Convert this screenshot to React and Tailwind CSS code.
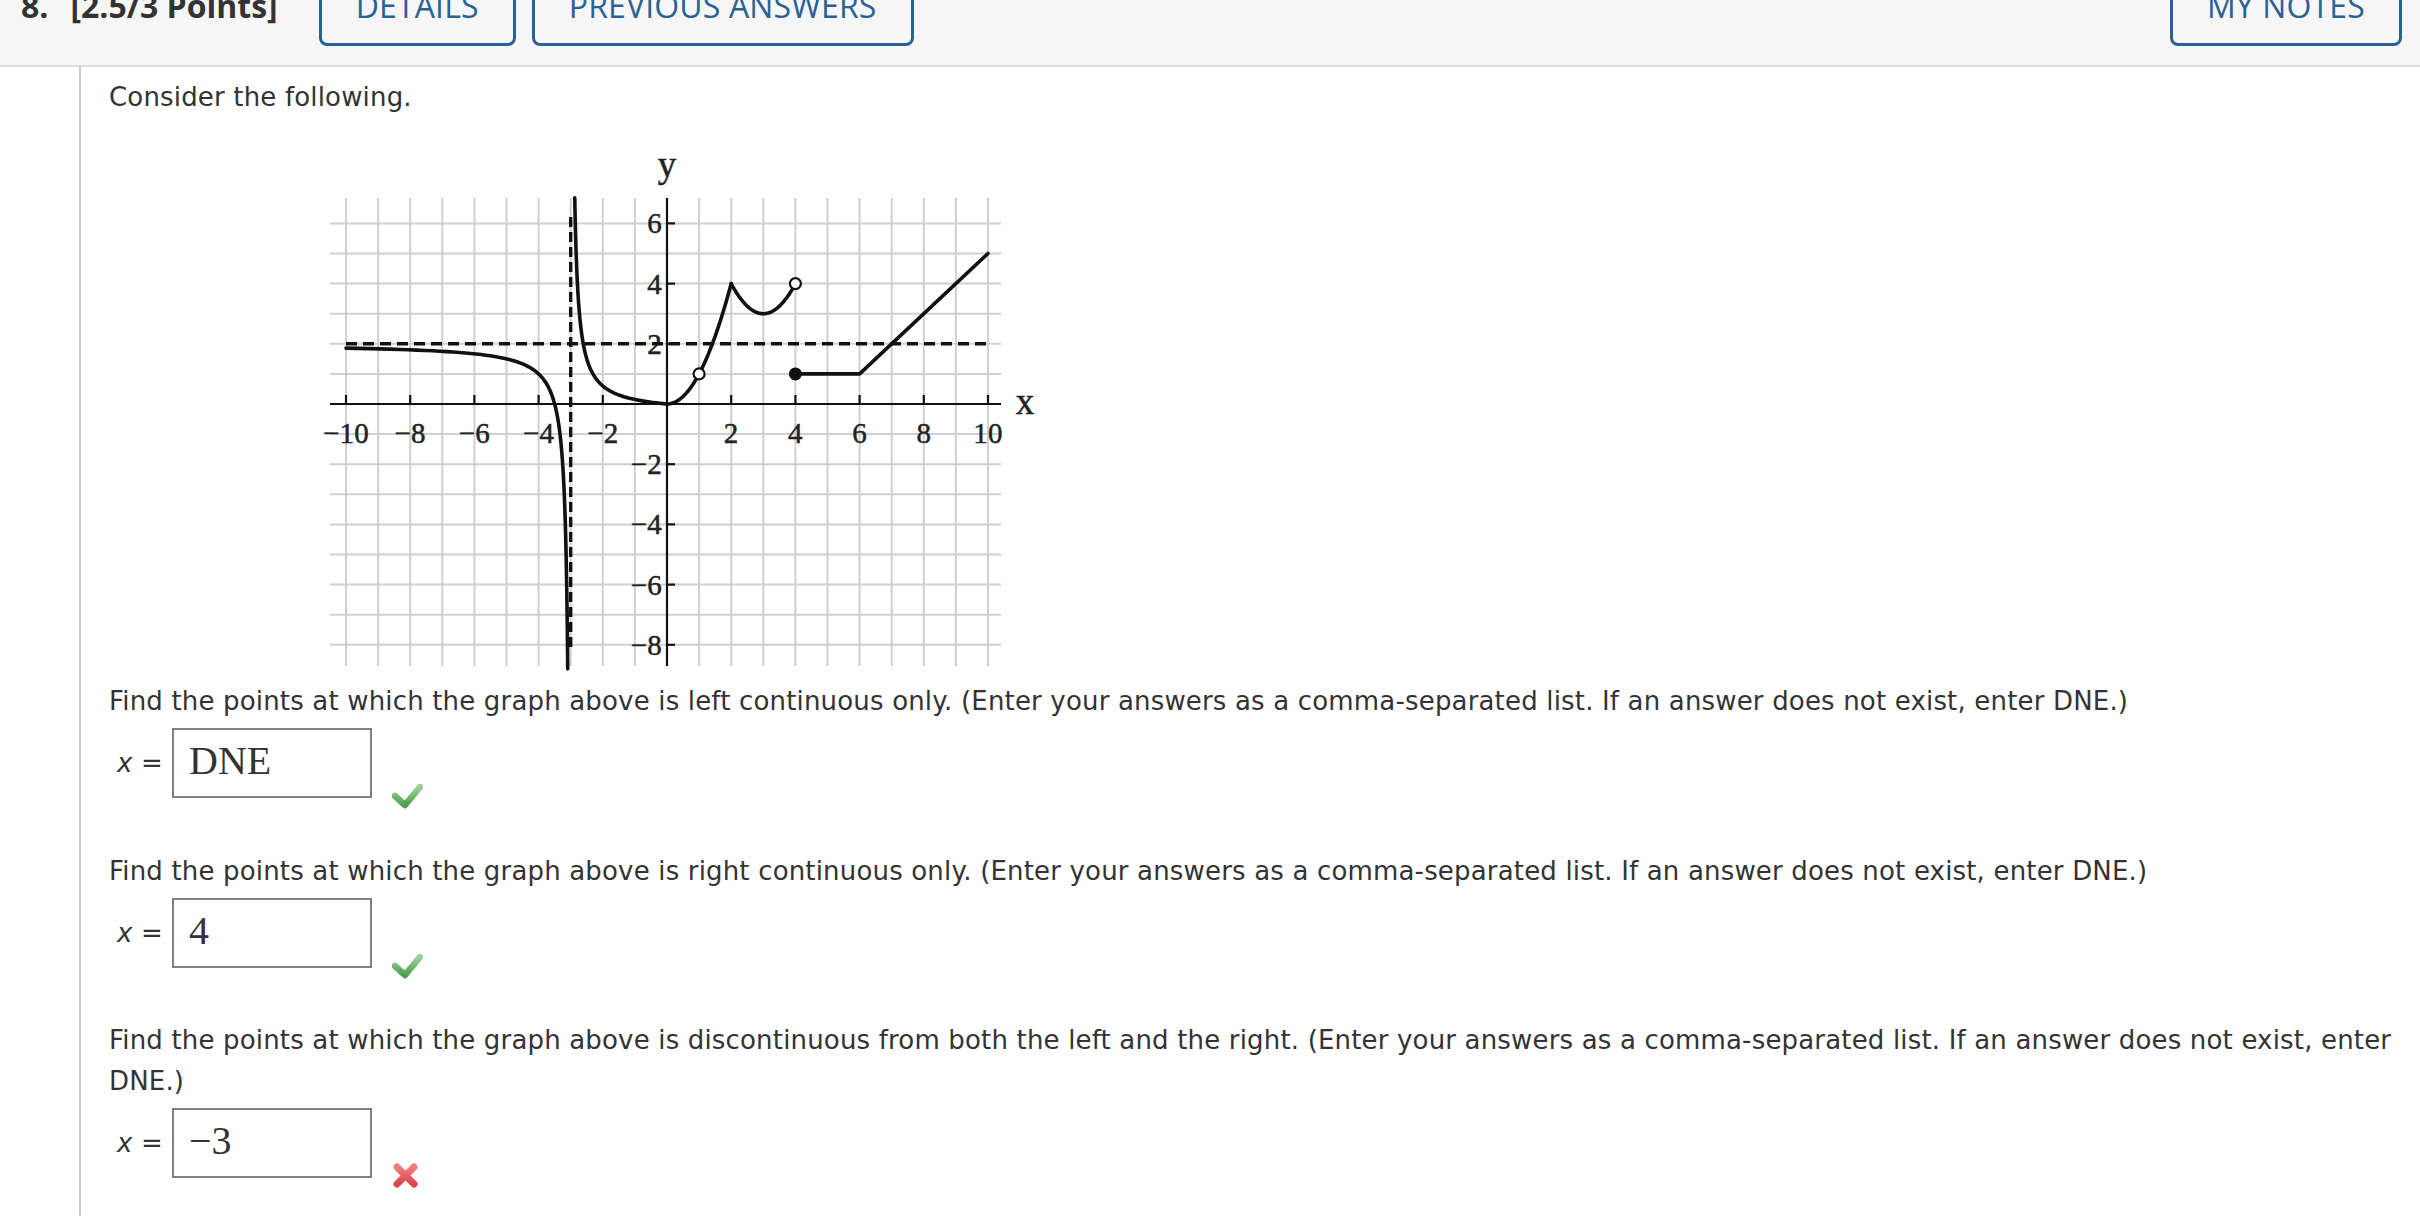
import React from 'react';

const X0 = 667;
const Y0 = 404;
const UX = 32.1;
const UY = 30.1;
const px = (u) => X0 + u * UX;
const py = (v) => Y0 - v * UY;

function linePath(fn, us) {
  return us
    .map((u, i) => `${i ? 'L' : 'M'}${px(u).toFixed(2)} ${py(fn(u)).toFixed(2)}`)
    .join(' ');
}

function geo(a, b, n) {
  const out = [];
  for (let k = 0; k <= n; k++) out.push(a * Math.pow(b / a, k / n));
  return out;
}

function lin(a, b, n) {
  const out = [];
  for (let k = 0; k <= n; k++) out.push(a + ((b - a) * k) / n);
  return out;
}

const leftBranch = linePath(
  (u) => 2 + 1 / (u + 3),
  geo(7, 0.0926, 80).map((t) => -3 - t)
);
const rightBranch = linePath(
  (u) => 0.9 / (u + 3) - 0.3,
  geo(0.1259, 3, 80).map((s) => -3 + s)
);
const parab = linePath((u) => u * u, lin(0, 2, 40));
const bowl = linePath((u) => (u - 3) * (u - 3) + 3, lin(2, 4, 40));
const ramp = `M${px(4)} ${py(1)} L${px(6)} ${py(1)} L${px(10)} ${py(5)}`;

function Graph() {
  const xs = [];
  for (let u = -10; u <= 10; u++) xs.push(u);
  const ys = [];
  for (let v = -8; v <= 6; v++) ys.push(v);
  const xl = [-10, -8, -6, -4, -2, 2, 4, 6, 8, 10];
  const yl = [6, 4, 2, -2, -4, -6, -8];
  const fmt = (n) => (n < 0 ? `\u2212${-n}` : `${n}`);
  return (
    <svg width="760" height="530" viewBox="300 145 760 530" className="block ml-[191px] mt-[27px]">
      <g stroke="#d0d0d0" strokeWidth="2">
        {xs.map((u) => (
          <line key={'gx' + u} x1={px(u)} x2={px(u)} y1={198} y2={666} />
        ))}
        {ys.map((v) => (
          <line key={'gy' + v} x1={330} x2={1001} y1={py(v)} y2={py(v)} />
        ))}
      </g>
      <g stroke="#111" strokeWidth="2.2">
        <line x1={X0} x2={X0} y1={198} y2={666} />
        <line x1={330} x2={1001} y1={Y0} y2={Y0} />
        {xl.map((u) => (
          <line key={'tx' + u} x1={px(u)} x2={px(u)} y1={Y0 - 9} y2={Y0} />
        ))}
        {yl.map((v) => (
          <line key={'ty' + v} x1={X0} x2={X0 + 8} y1={py(v)} y2={py(v)} />
        ))}
      </g>
      <g fill="#222" stroke="#222" strokeWidth="0.5" style={{ fontFamily: '"Liberation Serif", serif' }} fontSize="29">
        {xl.map((u) => (
          <text key={'lx' + u} x={px(u)} y={443} textAnchor="middle">
            {fmt(u)}
          </text>
        ))}
        {yl.map((v) => (
          <text key={'ly' + v} x={662} y={py(v) + 10} textAnchor="end">
            {fmt(v)}
          </text>
        ))}
        <text x={1025} y={414} textAnchor="middle" fontSize="37">x</text>
        <text x={667} y={177} textAnchor="middle" fontSize="37">y</text>
      </g>
      <g stroke="#111" strokeWidth="3.4" fill="none">
        <line x1={px(-10)} x2={px(10)} y1={py(2)} y2={py(2)} strokeDasharray="11 6" />
        <line x1={px(-3)} x2={px(-3)} y1={217} y2={648} strokeDasharray="10 5" />
      </g>
      <g stroke="#111" strokeWidth="3.6" fill="none" strokeLinejoin="round" strokeLinecap="round">
        <path d={leftBranch} />
        <path d={rightBranch} />
        <path d={parab} />
        <path d={bowl} />
        <path d={ramp} />
      </g>
      <circle cx={px(1)} cy={py(1)} r="5.5" fill="#fff" stroke="#111" strokeWidth="2.2" />
      <circle cx={px(4)} cy={py(4)} r="5.5" fill="#fff" stroke="#111" strokeWidth="2.2" />
      <circle cx={px(4)} cy={py(1)} r="6.5" fill="#111" />
    </svg>
  );
}

function Check() {
  return (
    <svg width="31" height="25" viewBox="0 0 31 25" className="ml-[20px] mt-[56px] shrink-0">
      <defs>
        <linearGradient id="ck" x1="0" y1="0" x2="0" y2="1">
          <stop offset="0" stopColor="#9ad49a" />
          <stop offset="1" stopColor="#4e9e4e" />
        </linearGradient>
      </defs>
      <path d="M3 12 L13 21 L28 3" fill="none" stroke="url(#ck)" strokeWidth="6.5" strokeLinecap="round" strokeLinejoin="round" />
    </svg>
  );
}

function Cross() {
  return (
    <svg width="27" height="27" viewBox="0 0 27 27" className="ml-[20px] mt-[54px] shrink-0">
      <defs>
        <linearGradient id="cx" x1="0" y1="0" x2="0" y2="1">
          <stop offset="0" stopColor="#ef7d7d" />
          <stop offset="1" stopColor="#d9474a" />
        </linearGradient>
      </defs>
      <g stroke="url(#cx)" strokeWidth="7" strokeLinecap="round">
        <line x1="5" y1="5" x2="22" y2="22" />
        <line x1="22" y1="5" x2="5" y2="22" />
      </g>
    </svg>
  );
}

function Answer({ value, ok }) {
  return (
    <div className="flex items-start h-[70px] mt-[6px]">
      <div className="flex items-center h-[70px] w-[63px] pl-[8px]">
        <span className="italic">x</span>
        <span>&nbsp;=</span>
      </div>
      <div className="w-[200px] h-[70px] border-2 border-[#808080] bg-white pl-[15px] pt-[11px]">
        <span className="text-[40px] leading-none text-[#333] tracking-normal" style={{ fontFamily: '"Liberation Serif", serif' }}>
          {value}
        </span>
      </div>
      {ok ? <Check /> : <Cross />}
    </div>
  );
}

function Btn({ children, className }) {
  return (
    <div className={`border-[3px] border-[#2b6296] rounded-[8px] px-[34px] pt-[7px] pb-[21px] text-[32px] leading-none tracking-[0.15px] text-[#2b6296] ${className}`}>
      {children}
    </div>
  );
}

export default function App() {
  return (
    <div className="min-h-[1216px] flex flex-col bg-white">
      <header className="h-[67px] shrink-0 bg-[#f6f6f6] border-b-2 border-[#dddddd] overflow-hidden" style={{ fontFamily: '"Open Sans", sans-serif' }}>
        <div className="flex items-start -mt-[20px] pl-[21px] pr-[18px]">
          <div className="mt-[10px] flex text-[32px] leading-none font-bold text-[#333]">
            <span>8.</span>
            <span className="ml-[22px]">[2.5/3 Points]</span>
          </div>
          <Btn className="ml-[41px]">DETAILS</Btn>
          <Btn className="ml-[16px]">PREVIOUS ANSWERS</Btn>
          <Btn className="ml-auto">MY NOTES</Btn>
        </div>
      </header>
      <div className="flex flex-1">
        <div className="w-[81px] shrink-0 border-r-2 border-[#cccccc]" />
        <main className="flex-1 pl-[28px] pt-[10px] text-[26px] leading-[41px] tracking-[0.17px] text-[#333]" style={{ fontFamily: '"DejaVu Sans", Verdana, sans-serif' }}>
          <p>Consider the following.</p>
          <Graph />
          <p className="mt-[6px] whitespace-nowrap">
            Find the points at which the graph above is left continuous only. (Enter your answers as a comma-separated list. If an answer does not exist, enter DNE.)
          </p>
          <Answer value="DNE" ok />
          <p className="mt-[53px] whitespace-nowrap">
            Find the points at which the graph above is right continuous only. (Enter your answers as a comma-separated list. If an answer does not exist, enter DNE.)
          </p>
          <Answer value="4" ok />
          <p className="mt-[52px]">
            <span className="whitespace-nowrap">
              Find the points at which the graph above is discontinuous from both the left and the right. (Enter your answers as a comma-separated list. If an answer does not exist, enter
            </span>
            <br />
            DNE.)
          </p>
          <Answer value={'\u22123'} />
        </main>
      </div>
    </div>
  );
}
